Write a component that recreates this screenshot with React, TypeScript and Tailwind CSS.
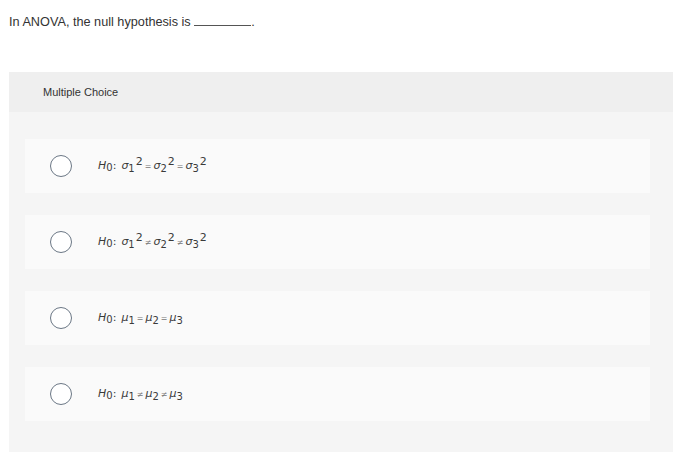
import React from "react";

type Part = { v: string; sub?: string; sup?: string; op?: boolean };

const options: Part[][] = [
  [
    { v: "σ", sub: "1", sup: "2" },
    { v: "=", op: true },
    { v: "σ", sub: "2", sup: "2" },
    { v: "=", op: true },
    { v: "σ", sub: "3", sup: "2" },
  ],
  [
    { v: "σ", sub: "1", sup: "2" },
    { v: "≠", op: true },
    { v: "σ", sub: "2", sup: "2" },
    { v: "≠", op: true },
    { v: "σ", sub: "3", sup: "2" },
  ],
  [
    { v: "μ", sub: "1" },
    { v: "=", op: true },
    { v: "μ", sub: "2" },
    { v: "=", op: true },
    { v: "μ", sub: "3" },
  ],
  [
    { v: "μ", sub: "1" },
    { v: "≠", op: true },
    { v: "μ", sub: "2" },
    { v: "≠", op: true },
    { v: "μ", sub: "3" },
  ],
];

function MathLine({ parts }: { parts: Part[] }) {
  return (
    <span className="flex items-baseline text-[#3a3a3a] font-['DejaVu_Sans',sans-serif] text-[11px]">
      <i className="italic">H</i>
      <span className="text-[10px] relative top-[2px]">0</span>
      <span className="mr-[5px]">:</span>
      {parts.map((p, i) =>
        p.op ? (
          <span key={i} className="text-[8px] text-[#777] mx-[2px]">
            {p.v}
          </span>
        ) : (
          <span key={i} className="flex items-baseline">
            <i className="italic">{p.v}</i>
            <span className="text-[10px] relative top-[3px]">{p.sub}</span>
            {p.sup && <span className="text-[11px] relative -top-[4px] ml-[1px]">{p.sup}</span>}
          </span>
        )
      )}
    </span>
  );
}

export default function App() {
  return (
    <div className="w-[700px] h-[454px] bg-white font-['Liberation_Sans',Arial,sans-serif]">
      <div className="pt-[14px] pl-[9px] h-[72px] text-[12.7px] text-[#333] leading-[16px]">
        In ANOVA, the null hypothesis is{" "}
        <span className="inline-block w-[57px] border-b border-[#555] align-baseline"></span>.
      </div>
      <div className="ml-[9px] w-[664px] bg-[#f5f5f5] pb-[31px]">
        <div className="h-[40px] bg-[#efefef] pl-[34px] flex items-center text-[11px] text-[#333]">
          Multiple Choice
        </div>
        <div className="pt-[27px] pl-[16px] pr-[23px] flex flex-col gap-[22px]">
          {options.map((o, i) => (
            <div key={i} className="h-[54px] bg-[#fafafa] flex items-center pl-[25px]">
              <span className="w-[22px] h-[22px] rounded-full border-[1.5px] border-[#6b7785] bg-white shrink-0" />
              <span className="ml-[26px]">
                <MathLine parts={o} />
              </span>
            </div>
          ))}
        </div>
      </div>
    </div>
  );
}
